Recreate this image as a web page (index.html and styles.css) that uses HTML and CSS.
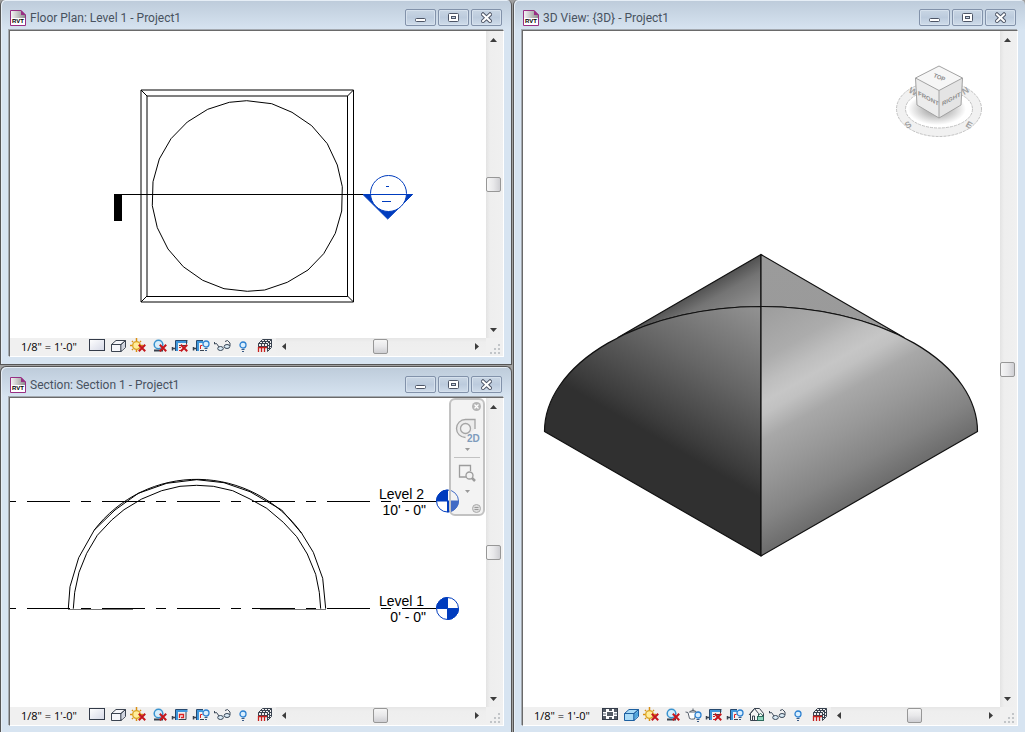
FILE: index.html
```html
<!DOCTYPE html>
<html lang="en">
<head>
  <meta charset="UTF-8" />
  <meta name="viewport" content="width=device-width, initial-scale=1.0" />
  <title>Project1</title>
  <link rel="stylesheet" href="styles.css">
</head>
<body>
  <!-- shared icons -->
  <svg class="defs" aria-hidden="true">
    <defs>
      <linearGradient id="paper" x1="0" y1="0" x2="1" y2="1">
        <stop offset="0" stop-color="#fff" /><stop offset="1" stop-color="#d5d8e6" />
      </linearGradient>
      <linearGradient id="page" x1="0" y1="0" x2="1" y2="0">
        <stop offset="0" stop-color="#f4f4f4" /><stop offset="1" stop-color="#8e8e8e" />
      </linearGradient>
    </defs>
    <symbol id="i-rvt" viewBox="0 0 16 16">
      <path d="M.5 .5H11L15.500 5V15.500H.5Z" fill="#fff" stroke="#982f83" />
      <path d="M1 1H11V5H15V8H1Z" fill="url(#page)" />
      <path d="M11 0L16 5H11Z" fill="#982f83" />
      <text x="8" y="13" text-anchor="middle" font-family="Liberation Sans, sans-serif" font-size="6" font-weight="bold">RVT</text>
    </symbol>
    <symbol id="i-min" viewBox="0 0 11 11"><rect x=".5" y="6.500" width="10" height="3" rx="1" fill="#fff" stroke="#4d5566" /></symbol>
    <symbol id="i-max" viewBox="0 0 11 11">
      <rect x=".5" y="1.500" width="10" height="8" rx="1" fill="#fff" stroke="#4d5566" />
      <rect x="3.500" y="4.500" width="4" height="2" fill="#c6d3e3" stroke="#4d5566" />
    </symbol>
    <symbol id="i-close" viewBox="0 0 11 11">
      <path d="M2 2.500L9 9M9 2.500L2 9" stroke="#4d5566" stroke-width="4" stroke-linecap="square" />
      <path d="M2 2.500L9 9M9 2.500L2 9" stroke="#fff" stroke-width="2" stroke-linecap="square" />
    </symbol>
    <symbol id="i-redx" viewBox="0 0 8 8"><path d="M1.500 1.500L6.500 6.500M6.500 1.500L1.500 6.500" stroke="#c4161c" stroke-width="2" stroke-linecap="square" /></symbol>
    <symbol id="i-lamp" viewBox="0 0 8 12">
      <circle cx="4" cy="4" r="3" fill="#d9efff" stroke="#2a7fd0" stroke-width="1.300" />
      <path d="M2.500 8.500h3M3 10.500h2" stroke="#3a5a83" />
    </symbol>
    <symbol id="i-detail" viewBox="0 0 21 18"><rect x="2.500" y="1.500" width="15" height="11" fill="url(#paper)" stroke="#333b49" /></symbol>
    <symbol id="i-detail-fine" viewBox="0 0 21 18">
      <rect x="2.500" y="1.500" width="15" height="11" fill="#fff" stroke="#333b49" />
      <path d="M3 2h3v3H3zM9 2h3v2H9zM14 2h3v3h-3zM7 5h6v4H7zM3 9h3v3H3zM9 10h3v2H9zM14 9h3v3h-3z" fill="#555c66" />
      <path d="M3 6h3v2H3zM14 6h3v2h-3z" fill="#a7adb5" />
    </symbol>
    <symbol id="i-box" viewBox="0 0 21 18">
      <path d="M3.500 6.500L8 2.500H17.500L13 6.500ZM3.500 6.500H13V13.500H3.500ZM13 6.500L17.500 2.500V9.500L13 13.500Z" fill="#f6f7fb" stroke="#3b4350" stroke-linejoin="round" />
      <path d="M13.500 7L17 4V9L13.500 12.500Z" fill="#cfd3de" />
    </symbol>
    <symbol id="i-box-blue" viewBox="0 0 21 18">
      <path d="M3.500 6.500L8 2.500H17.500L13 6.500ZM3.500 6.500H13V13.500H3.500ZM13 6.500L17.500 2.500V9.500L13 13.500Z" fill="#a9dbf7" stroke="#1c5fa0" stroke-linejoin="round" />
      <path d="M13.500 7L17 4V9L13.500 12.500Z" fill="#4fa5dc" />
    </symbol>
    <symbol id="i-sun" viewBox="0 0 21 18">
      <path d="M7.500 0V3M7.500 12V14M1 7.500H3M12 7.500h2M3 3L4 4M12 3L11 4M3 12L4 11" stroke="#d98e12" stroke-width="1.500" />
      <circle cx="7.500" cy="7.500" r="3.800" fill="#ffec9a" stroke="#d9a01c" stroke-width="1.300" />
      <use href="#i-redx" x="9" y="6" width="8" height="8" />
    </symbol>
    <symbol id="i-shadow" viewBox="0 0 21 18">
      <path d="M4 12.500h9" stroke="#39424f" stroke-width="2" />
      <circle cx="8.500" cy="6.500" r="4.300" fill="#d6eefb" stroke="#3a93cf" stroke-width="1.500" />
      <use href="#i-redx" x="9" y="6" width="8" height="8" />
    </symbol>
    <symbol id="i-frame" viewBox="0 0 21 18">
      <path d="M1 10.500h4M1.500 9V12.500" fill="none" stroke="#39424f" stroke-width="1.500" />
      <path d="M4.500 13V2.500H16.500" fill="none" stroke="#26496f" />
      <path d="M6 13V4H16.500" fill="none" stroke="#3f97dc" stroke-width="2" />
    </symbol>
    <symbol id="i-crop-off" viewBox="0 0 21 18">
      <use href="#i-frame" width="21" height="18" />
      <path d="M8 7.500h7" stroke="#39424f" />
      <path d="M15.500 2v4" stroke="#39424f" />
      <path d="M8 9.500h2M8 12.500h2" stroke="#d22" />
      <use href="#i-redx" x="9" y="6" width="8" height="8" />
    </symbol>
    <symbol id="i-crop" viewBox="0 0 21 18">
      <use href="#i-frame" width="21" height="18" />
      <path d="M15 5v7.500H7.500" fill="none" stroke="#39424f" />
      <path d="M8.500 11V7.500H12.500V10.500H10" fill="none" stroke="#d22" stroke-width="1.300" />
    </symbol>
    <symbol id="i-crop-show" viewBox="0 0 21 18">
      <path d="M1 10.500h4M1.500 9V12.500" fill="none" stroke="#39424f" stroke-width="1.500" />
      <path d="M4.500 13V2.500H11" fill="none" stroke="#26496f" />
      <path d="M6 13V4H11" fill="none" stroke="#3f97dc" stroke-width="2" />
      <path d="M8.500 11V7.500H10.500" fill="none" stroke="#d22" />
      <path d="M8 12.500h4" stroke="#39424f" />
      <use href="#i-lamp" x="10" y="2" width="8" height="12" />
    </symbol>
    <symbol id="i-glasses" viewBox="0 0 21 18">
      <path d="M1.500 4V6L3.500 5.500L6 9M12 3.500L14.500 2.500L17 5V8" fill="none" stroke="#3b4858" />
      <ellipse cx="7.500" cy="10.500" rx="2.800" ry="2" fill="#d9eaf5" stroke="#3b4858" />
      <ellipse cx="14" cy="8.500" rx="2.800" ry="2" fill="#d9eaf5" stroke="#3b4858" />
    </symbol>
    <symbol id="i-reveal" viewBox="0 0 21 18"><use href="#i-lamp" x="5" y="3" width="8" height="12" /></symbol>
    <symbol id="i-teapot" viewBox="0 0 21 18">
      <path d="M1.500 5L4 5.500L5.500 11.500Q7 12.500 10.500 12L12.500 5H5M6 4.500Q9 2 12 4.500M9 1.500v1.500M13 5.500q3-1 2 1" fill="#fff" stroke="#59626e" />
      <use href="#i-lamp" x="10" y="4" width="8" height="12" />
    </symbol>
    <symbol id="i-house" viewBox="0 0 21 18">
      <path d="M3.500 13.500V6.500L7.500 1.500H12.500L16.500 6.500V10M7.500 1.500L11.500 6.500V13.500H3.500M2 8L7.500 1.500" fill="#f5f5f5" stroke="#39424f" />
      <path d="M5.500 13V9h2v4" fill="none" stroke="#39424f" />
      <path d="M11.500 9.500V8q2-3 4 0v1.500" fill="none" stroke="#2e6a5c" />
      <rect x="10.500" y="9.500" width="6" height="4" fill="#8fd6bd" stroke="#2e6a5c" />
    </symbol>
    <symbol id="i-cage" viewBox="0 0 21 18">
      <path d="M3.500 10V5.500L7.500 1.500H16.500V9.500L12.500 13.500V5.500M3.500 5.500H12.500L16.500 1.500M6.500 5.500V9M9.500 5.500V9M5.500 3.500H14.500V11.500M10.500 1.500L6.500 5.500M13.500 1.500L9.500 5.500M3.500 8.500H12.500L16.500 4.500M12.500 11.500L16.500 7.500" fill="none" stroke="#39424f" />
      <path d="M3 9.500H12M3.500 9V14M6.500 9V14M9.500 9V14" stroke="#c8201c" stroke-width="1.300" />
    </symbol>
    <symbol id="i-grip" viewBox="0 0 17 18">
      <path d="M12 6h2v2h-2zM12 10h2v2h-2zM12 14h2v2h-2zM8 10h2v2H8zM8 14h2v2H8zM4 14h2v2H4z" fill="#c2c5c8" />
    </symbol>
    <symbol id="i-up" viewBox="0 0 7 4"><path d="M0 4L3.500 0L7 4Z" fill="#3c3c3c" /></symbol>
    <symbol id="i-down" viewBox="0 0 7 4"><path d="M0 0L3.500 4L7 0Z" fill="#3c3c3c" /></symbol>
    <symbol id="i-left" viewBox="0 0 4 7"><path d="M4 0L0 3.500L4 7Z" fill="#3c3c3c" /></symbol>
    <symbol id="i-right" viewBox="0 0 4 7"><path d="M0 0L4 3.500L0 7Z" fill="#3c3c3c" /></symbol>
  </svg>

  <main class="workspace">
    <section class="window plan">
      <header class="titlebar">
        <svg class="app-icon"><use href="#i-rvt" /></svg>
        <h2>Floor Plan: Level 1 - Project1</h2>
        <button aria-label="Minimize"><svg><use href="#i-min" /></svg></button>
        <button aria-label="Maximize"><svg><use href="#i-max" /></svg></button>
        <button aria-label="Close"><svg><use href="#i-close" /></svg></button>
      </header>
      <div class="view">
        <div class="canvas">
          <svg class="drawing" viewBox="10 31 476 307" fill="none" stroke="#000">
            <path d="M141 90H353.500V302H141ZM147 96H347.500V296.500H147ZM141 90l6 6M353.500 90l-6 6M353.500 302l-6-6M141 302l6-6" />
            <polygon points="246.700,100.700 271.700,103.700 292,112.300 311.700,125.700 327.300,143.700 337.300,165 342.300,186.700 341.700,211 335.300,233.300 323.700,253.700 308,270 287.300,282.300 264.700,290 247.300,291.300 224,288.700 202.700,280.300 183.300,266.700 168,249 157.300,227.700 152.300,205.700 153,181.700 159.300,159 171,138.700 187.300,122 207.700,109.300 229.300,102.300" />
            <path d="M114 194.500H363" />
            <rect x="114" y="194" width="8" height="27" fill="#000" stroke="none" />
            <g class="marker">
              <path d="M363 194.500H412.500L387.700 219Z" fill="#003cbe" />
              <circle cx="388.500" cy="193.500" r="18" fill="#fff" />
              <path d="M363 194.500H412.500M386 186.500h3M382 201.500h9" />
            </g>
          </svg>
        </div>
        <div class="scroll vertical">
          <button aria-label="Scroll up"><svg><use href="#i-up" /></svg></button>
          <span class="thumb"></span>
          <button aria-label="Scroll down"><svg><use href="#i-down" /></svg></button>
        </div>
        <footer class="viewbar">
          <button class="scale">1/8" = 1'-0"</button>
          <button class="tool" aria-label="Detail level"><svg><use href="#i-detail" /></svg></button>
          <button class="tool" aria-label="Visual style"><svg><use href="#i-box" /></svg></button>
          <button class="tool" aria-label="Sun path off"><svg><use href="#i-sun" /></svg></button>
          <button class="tool" aria-label="Shadows off"><svg><use href="#i-shadow" /></svg></button>
          <button class="tool" aria-label="Do not crop view"><svg><use href="#i-crop-off" /></svg></button>
          <button class="tool" aria-label="Show crop region"><svg><use href="#i-crop-show" /></svg></button>
          <button class="tool" aria-label="Temporary hide"><svg><use href="#i-glasses" /></svg></button>
          <button class="tool" aria-label="Reveal hidden elements"><svg><use href="#i-reveal" /></svg></button>
          <button class="tool" aria-label="Analytical model"><svg><use href="#i-cage" /></svg></button>
          <div class="scroll horizontal">
            <button aria-label="Scroll left"><svg><use href="#i-left" /></svg></button>
            <span class="thumb"></span>
            <button aria-label="Scroll right"><svg><use href="#i-right" /></svg></button>
          </div>
          <svg class="grip"><use href="#i-grip" /></svg>
        </footer>
      </div>
    </section>

    <section class="window section">
      <header class="titlebar">
        <svg class="app-icon"><use href="#i-rvt" /></svg>
        <h2>Section: Section 1 - Project1</h2>
        <button aria-label="Minimize"><svg><use href="#i-min" /></svg></button>
        <button aria-label="Maximize"><svg><use href="#i-max" /></svg></button>
        <button aria-label="Close"><svg><use href="#i-close" /></svg></button>
      </header>
      <div class="view">
        <div class="canvas">
          <svg class="drawing" viewBox="10 398 476 309" fill="none" stroke="#000">
            <path class="level-line" d="M10 501.500H436M10 608.500H436" />
            <path d="M68 609.500H133M260 609.500H326" stroke="#777" />
            <polyline points="68.300,608.700 70,586.700 78.700,557.700 94.300,530 115,510 138.300,493.300 166.700,483.300 196.700,479.700 224,482.700 250,491.700 281.700,510 301.700,533.300 313.300,552.300 322.700,578.300 325.700,608.700" />
            <path d="M94.300 530A129 129 0 0 1 301.700 533.300" />
            <polyline points="73.300,608.700 74.700,592.300 79,572.300 86.700,553.300 97.300,535.300 111.700,520 124,509.700 141.700,499 161.700,490.700 180,486.300 196.700,485.300 213.300,486.300 232.700,490.700 250,499 266.700,508.300 283.300,522.300 296.700,536.700 307.300,554 315.700,574.300 319.300,592.300 320.700,608.700" />
            <g class="level-text">
              <text x="379" y="499">Level 2</text>
              <text x="426" y="515" text-anchor="end">10' - 0"</text>
              <text x="379" y="606">Level 1</text>
              <text x="426" y="622" text-anchor="end">0' - 0"</text>
            </g>
            <g class="marker">
              <circle cx="447.500" cy="501" r="11" fill="#fff" />
              <path d="M447.500 501V490A11 11 0 0 0 436.500 501ZM447.500 501V512A11 11 0 0 0 458.500 501Z" fill="#003cbe" />
              <circle cx="447.500" cy="608.500" r="11" fill="#fff" />
              <path d="M447.500 608.500V597.500A11 11 0 0 0 436.500 608.500ZM447.500 608.500V619.500A11 11 0 0 0 458.500 608.500Z" fill="#003cbe" />
            </g>
          </svg>
          <nav class="navbar" aria-label="Navigation">
            <button class="nav-small" aria-label="Close navigation bar">
              <svg width="9" height="9"><circle cx="4.500" cy="4.500" r="4.500" fill="#b5b5b5" /><path d="M2.500 2.500l4 4M6.500 2.500l-4 4" stroke="#fff" stroke-width="1.300" /></svg>
            </button>
            <button class="nav-wheel" aria-label="Steering wheel 2D">
              <svg width="30" height="32" fill="none" stroke="#a4a4a4" stroke-width="1.300">
                <path d="M23 17V7.500H13.500A9 9 0 1 0 13.500 25.500" fill="#ececec" />
                <circle cx="13.500" cy="16.500" r="5" fill="#f1f1f1" />
                <text x="15" y="30">2D</text>
              </svg>
            </button>
            <button class="nav-caret" aria-label="Wheel options"><svg width="5" height="3"><path d="M0 0h5L2.500 3Z" fill="#999" /></svg></button>
            <button class="nav-zoom" aria-label="Zoom region">
              <svg width="26" height="28" fill="none" stroke="#9c9c9c" stroke-width="1.300">
                <path d="M14 19H5.500V7.500H16.500V13" />
                <circle cx="15.500" cy="17.500" r="3.500" fill="#f1f1f1" />
                <path d="M18 20L21 23" stroke-width="2.500" />
              </svg>
            </button>
            <button class="nav-caret" aria-label="Zoom options"><svg width="5" height="3"><path d="M0 0h5L2.500 3Z" fill="#999" /></svg></button>
            <button class="nav-small last" aria-label="Customize">
              <svg width="9" height="9"><circle cx="4.500" cy="4.500" r="4" fill="#ddd" stroke="#aaa" /><path d="M2.500 3.500h4M2.500 5.500h4" stroke="#999" /></svg>
            </button>
          </nav>
        </div>
        <div class="scroll vertical">
          <button aria-label="Scroll up"><svg><use href="#i-up" /></svg></button>
          <span class="thumb"></span>
          <button aria-label="Scroll down"><svg><use href="#i-down" /></svg></button>
        </div>
        <footer class="viewbar">
          <button class="scale">1/8" = 1'-0"</button>
          <button class="tool" aria-label="Detail level"><svg><use href="#i-detail" /></svg></button>
          <button class="tool" aria-label="Visual style"><svg><use href="#i-box" /></svg></button>
          <button class="tool" aria-label="Sun path off"><svg><use href="#i-sun" /></svg></button>
          <button class="tool" aria-label="Shadows off"><svg><use href="#i-shadow" /></svg></button>
          <button class="tool" aria-label="Crop view"><svg><use href="#i-crop" /></svg></button>
          <button class="tool" aria-label="Show crop region"><svg><use href="#i-crop-show" /></svg></button>
          <button class="tool" aria-label="Temporary hide"><svg><use href="#i-glasses" /></svg></button>
          <button class="tool" aria-label="Reveal hidden elements"><svg><use href="#i-reveal" /></svg></button>
          <button class="tool" aria-label="Analytical model"><svg><use href="#i-cage" /></svg></button>
          <div class="scroll horizontal">
            <button aria-label="Scroll left"><svg><use href="#i-left" /></svg></button>
            <span class="thumb"></span>
            <button aria-label="Scroll right"><svg><use href="#i-right" /></svg></button>
          </div>
          <svg class="grip"><use href="#i-grip" /></svg>
        </footer>
      </div>
    </section>

    <section class="window three-d">
      <header class="titlebar">
        <svg class="app-icon"><use href="#i-rvt" /></svg>
        <h2>3D View: {3D} - Project1</h2>
        <button aria-label="Minimize"><svg><use href="#i-min" /></svg></button>
        <button aria-label="Maximize"><svg><use href="#i-max" /></svg></button>
        <button aria-label="Close"><svg><use href="#i-close" /></svg></button>
      </header>
      <div class="view">
        <div class="canvas">
          <svg class="drawing" viewBox="523 31 477 676" stroke="#111" stroke-width="1.200" stroke-linejoin="round">
            <defs>
              <linearGradient id="left-back" gradientUnits="userSpaceOnUse" x1="761" y1="254" x2="783" y2="293">
                <stop offset="0" stop-color="#505050" /><stop offset=".35" stop-color="#747474" /><stop offset="1" stop-color="#939393" />
              </linearGradient>
              <linearGradient id="right-back" gradientUnits="userSpaceOnUse" x1="761" y1="255" x2="761" y2="340">
                <stop offset="0" stop-color="#9b9b9b" /><stop offset="1" stop-color="#9a9a9a" />
              </linearGradient>
              <linearGradient id="left-front" gradientUnits="userSpaceOnUse" x1="761" y1="498" x2="844" y2="354">
                <stop offset="0" stop-color="#303030" /><stop offset=".1" stop-color="#3c3c3c" /><stop offset=".5" stop-color="#656565" /><stop offset="1" stop-color="#939393" />
              </linearGradient>
              <linearGradient id="right-front" gradientUnits="userSpaceOnUse" x1="761" y1="556" x2="653" y2="368">
                <stop offset="0" stop-color="#6c6c6c" />
                <stop offset=".14" stop-color="#848484" />
                <stop offset=".3" stop-color="#979797" />
                <stop offset=".46" stop-color="#a8a8a8" />
                <stop offset=".56" stop-color="#c1c1c1" />
                <stop offset=".61" stop-color="#c6c6c6" />
                <stop offset=".68" stop-color="#bebebe" />
                <stop offset=".78" stop-color="#acacac" />
                <stop offset="1" stop-color="#9c9c9c" />
              </linearGradient>
            </defs>
            <path d="M761 254.500V306.500A216.500 125 0 0 0 618 337.500Z" fill="url(#left-back)" />
            <path d="M761 254.500V306.500A216.500 125 0 0 1 904 337.500Z" fill="url(#right-back)" />
            <path d="M761 306.500V556L544.500 431.500A216.500 125 0 0 1 761 306.500Z" fill="url(#left-front)" />
            <path d="M761 306.500V556L977.500 431.500A216.500 125 0 0 0 761 306.500Z" fill="url(#right-front)" />
          </svg>
          <svg class="viewcube" viewBox="894 62 92 80">
            <defs>
              <radialGradient id="cube-shadow">
                <stop offset=".4" stop-color="#bbb" /><stop offset="1" stop-color="#fff" />
              </radialGradient>
            </defs>
            <ellipse cx="939" cy="109" rx="42.500" ry="27.500" fill="#f1f1f1" stroke="#c2c2c2" stroke-dasharray="3 1" />
            <ellipse cx="939" cy="109" rx="33.500" ry="19" fill="#fff" stroke="#c2c2c2" stroke-dasharray="3 1" />
            <ellipse cx="937" cy="109" rx="29" ry="16" fill="url(#cube-shadow)" />
            <g class="compass">
              <text x="909" y="94" transform="rotate(30 912 91)">W</text>
              <text x="962" y="94" transform="rotate(-30 965 91)">N</text>
              <text x="905" y="128" transform="rotate(-30 908 125)">S</text>
              <text x="966" y="128" transform="rotate(30 969 125)">E</text>
            </g>
            <path d="M939 66L962.500 78L939 90.500L915.500 78Z" fill="#f6f6f6" />
            <path d="M915.500 78L939 90.500V118L917 105Z" fill="#ececec" />
            <path d="M962.500 78L939 90.500V118L961 105Z" fill="#e4e4e4" />
            <path d="M939 66L962.500 78L961 105L939 118L917 105L915.500 78ZM915.500 78L939 90.500L962.500 78M939 90.500V118" fill="none" stroke="#a2a2a2" />
            <g class="cube-text">
              <text transform="translate(933 77) rotate(22)">TOP</text>
              <text transform="translate(918 95) skewY(28)">FRONT</text>
              <text transform="translate(942 106) skewY(-28)">RIGHT</text>
            </g>
          </svg>
        </div>
        <div class="scroll vertical">
          <button aria-label="Scroll up"><svg><use href="#i-up" /></svg></button>
          <span class="thumb"></span>
          <button aria-label="Scroll down"><svg><use href="#i-down" /></svg></button>
        </div>
        <footer class="viewbar">
          <button class="scale">1/8" = 1'-0"</button>
          <button class="tool" aria-label="Detail level"><svg><use href="#i-detail-fine" /></svg></button>
          <button class="tool" aria-label="Visual style"><svg><use href="#i-box-blue" /></svg></button>
          <button class="tool" aria-label="Sun path off"><svg><use href="#i-sun" /></svg></button>
          <button class="tool" aria-label="Shadows off"><svg><use href="#i-shadow" /></svg></button>
          <button class="tool" aria-label="Rendering dialog"><svg><use href="#i-teapot" /></svg></button>
          <button class="tool" aria-label="Do not crop view"><svg><use href="#i-crop-off" /></svg></button>
          <button class="tool" aria-label="Show crop region"><svg><use href="#i-crop-show" /></svg></button>
          <button class="tool" aria-label="Unlocked 3D view"><svg><use href="#i-house" /></svg></button>
          <button class="tool" aria-label="Temporary hide"><svg><use href="#i-glasses" /></svg></button>
          <button class="tool" aria-label="Reveal hidden elements"><svg><use href="#i-reveal" /></svg></button>
          <button class="tool" aria-label="Analytical model"><svg><use href="#i-cage" /></svg></button>
          <div class="scroll horizontal">
            <button aria-label="Scroll left"><svg><use href="#i-left" /></svg></button>
            <span class="thumb"></span>
            <button aria-label="Scroll right"><svg><use href="#i-right" /></svg></button>
          </div>
          <svg class="grip"><use href="#i-grip" /></svg>
        </footer>
      </div>
    </section>
  </main>
</body>
</html>
```

FILE: styles.css
```css
* {
  box-sizing: border-box;
}
body {
  margin: 0;
  font-family: "Open Sans", "Noto Sans", sans-serif;
  font-size: 12px;
  background: #a0a0a0;
}
button {
  margin: 0;
  padding: 0;
  border: 0;
  background: none;
  font: inherit;
  color: inherit;
}
svg {
  display: block;
  flex: none;
}
.defs {
  position: absolute;
  width: 0;
  height: 0;
}

/* window tiling */
.workspace {
  display: grid;
  grid-template-columns: 1fr 1fr;
  grid-template-rows: 365fr 366fr;
  gap: 1px;
  height: 100vh;
}
.window {
  display: flex;
  flex-direction: column;
  min-width: 0;
  min-height: 0;
  padding: 0 7px 6px;
  border: 0 solid #565656;
  background: linear-gradient(#bdcbda, #d7e4f1 30px);
  box-shadow: inset 1px 1px 0 #e6eef6;
}
.plan {
  padding-bottom: 7px;
  border-width: 0 1px 1px;
  border-radius: 5px 5px 0 0;
}
.section {
  grid-row: 2;
  border-width: 1px 1px 0;
  border-radius: 6px 6px 0 0;
}
.three-d {
  grid-column: 2;
  grid-row: 1 / 3;
  border-left-width: 1px;
  border-radius: 5px 5px 0 0;
}

.titlebar {
  display: flex;
  flex: none;
  align-items: center;
  gap: 2px;
  height: 29px;
  padding: 6px 2px 0;
  color: #48525f;
}
.titlebar h2 {
  flex: 1;
  margin: 0 0 0 2px;
  font-family: Roboto, "Open Sans", sans-serif;
  font-size: 12px;
  font-weight: normal;
  line-height: 16px;
  white-space: nowrap;
}
.app-icon {
  width: 16px;
  height: 16px;
}
.titlebar button {
  display: flex;
  align-items: center;
  justify-content: center;
  width: 31px;
  height: 17px;
  border: 1px solid #8292aa;
  border-radius: 2px;
  background: linear-gradient(#c9d6e4, #bccbdd 50%, #cfdcea);
  box-shadow: inset 0 0 0 1px #d6e1ed;
}
.titlebar button svg {
  width: 11px;
  height: 11px;
}

/* view area */
.view {
  display: grid;
  flex: 1;
  grid-template-columns: 1fr 17px;
  grid-template-rows: 1fr 18px;
  min-height: 0;
  margin: 1px 0 0 1px;
  border: 1px solid #fff;
  border-top-color: #6a6a6a;
  border-left-color: #6a6a6a;
  box-shadow: -1px -1px 0 #a3a9b0;
  background: #f0f0f0;
}
.canvas {
  position: relative;
  min-width: 0;
  min-height: 0;
  overflow: hidden;
  background: #fff;
}
.drawing {
  width: 100%;
  height: 100%;
}
.marker {
  stroke: #003cbe;
}
.level-line {
  stroke-dasharray: 43 11 10 11;
  stroke-dashoffset: 58;
}
.level-text {
  font-family: "Liberation Sans", sans-serif;
  font-size: 14px;
  fill: #000;
  stroke: none;
}

/* scroll bars */
.scroll {
  display: flex;
  align-items: center;
  justify-content: space-between;
}
.scroll button {
  display: flex;
  align-items: center;
  justify-content: center;
  width: 15px;
  height: 17px;
}
.thumb {
  width: 15px;
  height: 15px;
  border: 1px solid #979797;
  border-radius: 2px;
}
.vertical {
  flex-direction: column;
  padding-right: 2px;
  background: linear-gradient(90deg, #e3e3e3, #eee 4px, #f0f0f0);
}
.vertical svg {
  width: 7px;
  height: 4px;
}
.vertical .thumb {
  background: linear-gradient(90deg, #f6f6f6, #e8e8ea 50%, #cfcfd3);
}
.horizontal {
  flex: 1;
  align-items: flex-start;
  padding-right: 2px;
  background: linear-gradient(#e6e6e6, #eee 4px, #f0f0f0);
}
.horizontal svg {
  width: 4px;
  height: 7px;
}
.horizontal .thumb {
  margin-top: 1px;
  background: linear-gradient(#f6f6f6, #e8e8ea 50%, #cfcfd3);
}

/* view control bar */
.viewbar {
  display: flex;
  grid-column: 1 / 3;
  background: #f0f0f0;
}
.scale {
  width: 77px;
  padding-left: 11px;
  font-size: 11px;
  line-height: 18px;
  text-align: left;
  white-space: nowrap;
  color: #000;
}
.tool,
.tool svg {
  width: 21px;
  height: 18px;
}
.grip {
  width: 17px;
  height: 18px;
}

/* navigation bar over the section view */
.navbar {
  position: absolute;
  top: 0;
  right: 1px;
  display: flex;
  flex-direction: column;
  align-items: center;
  width: 36px;
  height: 118px;
  border: 2px solid #c2c2c2;
  border-radius: 6px;
  background: rgba(214, 214, 214, 0.3);
}
.navbar text {
  font-family: "Liberation Sans", sans-serif;
  font-size: 10px;
  font-weight: bold;
  fill: #7f9cbc;
  stroke: none;
}
.nav-small {
  align-self: flex-end;
  height: 12px;
  padding-right: 2px;
}
.nav-small.last {
  margin-top: auto;
}
.nav-caret {
  height: 10px;
}
.nav-zoom {
  margin-top: 3px;
  border-top: 1px solid #c2c2c2;
}

.viewcube {
  position: absolute;
  top: 31px;
  right: 14px;
  width: 92px;
  height: 80px;
}
.compass text,
.cube-text text {
  font-family: "Liberation Sans", sans-serif;
  font-weight: bold;
  fill: #a0a0a0;
}
.compass text {
  font-size: 9px;
}
.cube-text text {
  font-size: 6px;
  fill: #8c8c8c;
}
```
